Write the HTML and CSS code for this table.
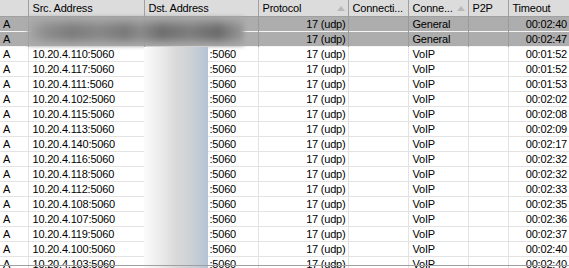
FILE: index.html
```html
<!DOCTYPE html>
<html>
<head>
<meta charset="utf-8">
<link rel="stylesheet" href="styles.css">
</head>
<body>
<div class="list">
  <table class="grid">
    <colgroup>
      <col class="c-flag"><col class="c-src"><col class="c-dst"><col class="c-proto"><col class="c-cs"><col class="c-conn"><col class="c-p2p"><col class="c-time">
    </colgroup>
    <thead>
      <tr>
        <th></th>
        <th>Src. Address</th>
        <th>Dst. Address</th>
        <th class="sorted">Protocol<span class="arrow"></span></th>
        <th>Connecti...</th>
        <th class="sorted">Conne...<span class="arrow"></span></th>
        <th>P2P</th>
        <th>Timeout</th>
      </tr>
    </thead>
    <tbody>
      <tr class="sel"><td>A</td><td></td><td></td><td class="r">17 (udp)</td><td></td><td>General</td><td></td><td class="r">00:02:40</td></tr>
      <tr class="sel"><td>A</td><td></td><td></td><td class="r">17 (udp)</td><td></td><td>General</td><td></td><td class="r">00:02:47</td></tr>
      <tr><td>A</td><td>10.20.4.110:5060</td><td class="dst">:5060</td><td class="r">17 (udp)</td><td></td><td>VoIP</td><td></td><td class="r">00:01:52</td></tr>
      <tr><td>A</td><td>10.20.4.117:5060</td><td class="dst">:5060</td><td class="r">17 (udp)</td><td></td><td>VoIP</td><td></td><td class="r">00:01:52</td></tr>
      <tr><td>A</td><td>10.20.4.111:5060</td><td class="dst">:5060</td><td class="r">17 (udp)</td><td></td><td>VoIP</td><td></td><td class="r">00:01:53</td></tr>
      <tr><td>A</td><td>10.20.4.102:5060</td><td class="dst">:5060</td><td class="r">17 (udp)</td><td></td><td>VoIP</td><td></td><td class="r">00:02:02</td></tr>
      <tr><td>A</td><td>10.20.4.115:5060</td><td class="dst">:5060</td><td class="r">17 (udp)</td><td></td><td>VoIP</td><td></td><td class="r">00:02:08</td></tr>
      <tr><td>A</td><td>10.20.4.113:5060</td><td class="dst">:5060</td><td class="r">17 (udp)</td><td></td><td>VoIP</td><td></td><td class="r">00:02:09</td></tr>
      <tr><td>A</td><td>10.20.4.140:5060</td><td class="dst">:5060</td><td class="r">17 (udp)</td><td></td><td>VoIP</td><td></td><td class="r">00:02:17</td></tr>
      <tr><td>A</td><td>10.20.4.116:5060</td><td class="dst">:5060</td><td class="r">17 (udp)</td><td></td><td>VoIP</td><td></td><td class="r">00:02:32</td></tr>
      <tr><td>A</td><td>10.20.4.118:5060</td><td class="dst">:5060</td><td class="r">17 (udp)</td><td></td><td>VoIP</td><td></td><td class="r">00:02:32</td></tr>
      <tr><td>A</td><td>10.20.4.112:5060</td><td class="dst">:5060</td><td class="r">17 (udp)</td><td></td><td>VoIP</td><td></td><td class="r">00:02:33</td></tr>
      <tr><td>A</td><td>10.20.4.108:5060</td><td class="dst">:5060</td><td class="r">17 (udp)</td><td></td><td>VoIP</td><td></td><td class="r">00:02:35</td></tr>
      <tr><td>A</td><td>10.20.4.107:5060</td><td class="dst">:5060</td><td class="r">17 (udp)</td><td></td><td>VoIP</td><td></td><td class="r">00:02:36</td></tr>
      <tr><td>A</td><td>10.20.4.119:5060</td><td class="dst">:5060</td><td class="r">17 (udp)</td><td></td><td>VoIP</td><td></td><td class="r">00:02:37</td></tr>
      <tr><td>A</td><td>10.20.4.100:5060</td><td class="dst">:5060</td><td class="r">17 (udp)</td><td></td><td>VoIP</td><td></td><td class="r">00:02:40</td></tr>
      <tr><td>A</td><td>10.20.4.103:5060</td><td class="dst">:5060</td><td class="r">17 (udp)</td><td></td><td>VoIP</td><td></td><td class="r">00:02:40</td></tr>
    </tbody>
  </table>
  <div class="redact redact-top"></div>
  <div class="redact redact-dst"></div>
  <div class="frame-bottom"></div>
</div>
</body>
</html>
```

FILE: styles.css
```css
html, body {
  margin: 0;
  padding: 0;
  background: #ffffff;
  overflow: hidden;
}

.list {
  position: relative;
  width: 569px;
  height: 268px;
  overflow: hidden;
  font-family: "Liberation Sans", Arial, sans-serif;
  font-size: 11px;
  letter-spacing: -0.2px;
  color: #000;
}

.grid {
  table-layout: fixed;
  border-collapse: collapse;
  width: 569px;
}

.c-flag { width: 28px; }
.c-src { width: 116px; }
.c-dst { width: 114px; }
.c-proto { width: 90px; }
.c-cs { width: 60px; }
.c-conn { width: 60px; }
.c-p2p { width: 40px; }
.c-time { width: 61px; }

th {
  height: 16px;
  padding: 0 0 0 4px;
  background: #dcdcdc;
  border-left: 1px solid #a0a0a0;
  border-bottom: 1px solid #a0a0a0;
  text-align: left;
  font-weight: normal;
  white-space: nowrap;
  overflow: hidden;
  position: relative;
  line-height: 16px;
}

th:first-child {
  border-left: none;
}

.arrow {
  position: absolute;
  right: 3px;
  top: 6px;
  width: 0;
  height: 0;
  border-left: 4px solid transparent;
  border-right: 4px solid transparent;
  border-bottom: 5px solid #b8b8b8;
}

td {
  height: 14px;
  padding: 0 0 0 4px;
  border-top: 1px solid #e3e3e3;
  border-left: 1px solid #e3e3e3;
  white-space: nowrap;
  overflow: hidden;
  line-height: 14px;
}

td:first-child {
  border-left: none;
  padding-left: 3px;
}

td.r {
  text-align: right;
  padding: 0 2px 0 0;
}

td.dst {
  padding-left: 65px;
}

tr.sel td {
  background: #adadad;
  border-top-color: #c4c4c4;
  border-left-color: #9a9a9a;
}

tr.sel + tr td {
  border-top-color: #f4f4f4;
}

.redact {
  position: absolute;
}

.redact-top {
  left: 28px;
  top: 17px;
  width: 216px;
  height: 29px;
  background:
    linear-gradient(to bottom, rgba(173,173,173,0.9) 0%, rgba(140,140,140,0) 40%, rgba(140,140,140,0) 65%, rgba(173,173,173,0.9) 100%),
    linear-gradient(to right, #a8a8a8 0%, #8e8e8e 8%, #7d7d7d 20%, #888 33%, #7a7a7a 45%, #8a8a8a 52%, #6f6f6f 62%, #7e7e7e 75%, #6c6c6c 88%, #9a9a9a 100%);
  filter: blur(2px);
}

.redact-dst {
  left: 144px;
  top: 47px;
  width: 64px;
  height: 221px;
  background: linear-gradient(to right, #fbfbfb 0%, #ececec 25%, #d9d9d9 50%, #cfd2d5 70%, #bfcad6 88%, #b4c3d3 100%);
}

.frame-bottom {
  position: absolute;
  left: 0;
  right: 0;
  bottom: 2px;
  height: 1px;
  background: #a0a0a0;
}
```
